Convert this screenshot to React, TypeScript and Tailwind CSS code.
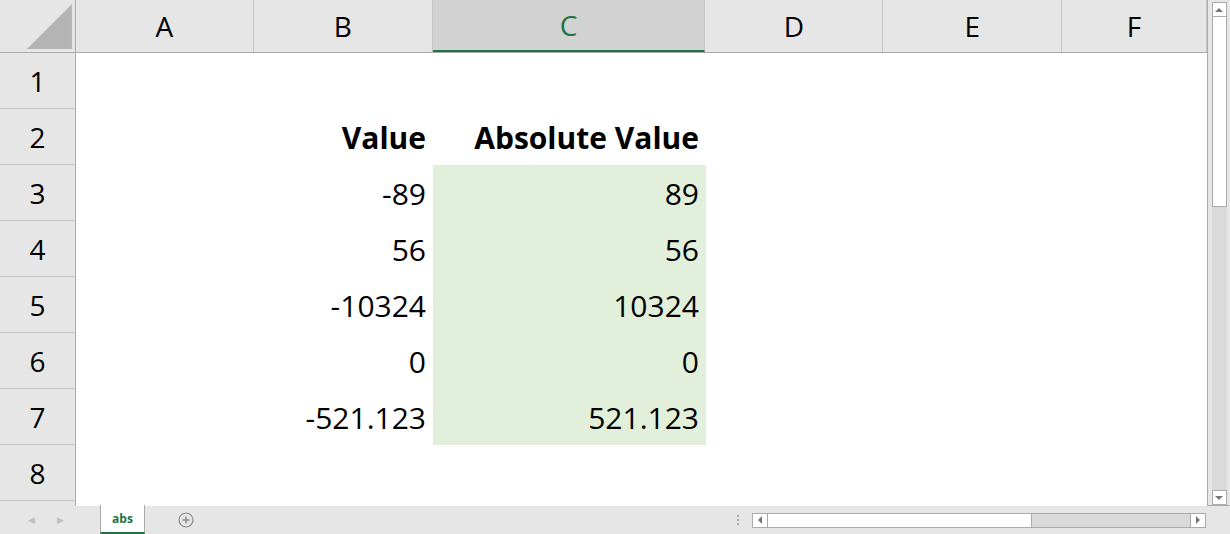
const cols = [
  { l: "A", w: 178 },
  { l: "B", w: 179 },
  { l: "C", w: 273 },
  { l: "D", w: 178 },
  { l: "E", w: 179 },
  { l: "F", w: 145 },
];
const data: Record<number, [string, string, boolean]> = {
  2: ["Value", "Absolute Value", true],
  3: ["-89", "89", false],
  4: ["56", "56", false],
  5: ["-10324", "10324", false],
  6: ["0", "0", false],
  7: ["-521.123", "521.123", false],
};

export default function App() {
  const font = { fontFamily: "'Open Sans','Noto Sans',sans-serif" };
  return (
    <div className="w-[1230px] h-[534px] bg-[#e6e6e6] flex flex-col overflow-hidden text-black" style={font}>
      <div className="flex h-[506px]">
        <div className="w-[1208px] flex flex-col border-r border-[#ababab]">
          {/* header */}
          <div className="flex h-[53px] border-b border-[#ababab]">
            <div className="w-[76px] h-[52px] border-r border-[#ababab] relative">
              <div
                className="absolute right-[3px] bottom-[3px] w-[45px] h-[45px] bg-[#b4b4b4]"
                style={{ clipPath: "polygon(100% 0,100% 100%,0 100%)" }}
              />
            </div>
            {cols.map((c) => (
              <div
                key={c.l}
                style={{ width: c.w }}
                className={`h-[52px] flex items-center justify-center text-[28px] border-r border-[#c6c6c6] ${
                  c.l === "C" ? "bg-[#d2d2d2] text-[#217346] border-b-2 border-b-[#217346]" : ""
                }`}
              >
                {c.l}
              </div>
            ))}
          </div>
          {[1, 2, 3, 4, 5, 6, 7, 8].map((r) => {
            const d = data[r];
            return (
              <div key={r} className="flex h-[56px]">
                <div className="w-[76px] border-r border-[#ababab] border-b border-b-[#c6c6c6] flex items-center justify-center text-[28px] shrink-0">
                  {r}
                </div>
                <div className="flex-1 bg-white flex">
                  <div className="w-[178px]" />
                  <div className={`w-[179px] flex items-center justify-end pr-[7px] text-[30px] ${d && d[2] ? "font-bold" : ""}`}>
                    {d ? d[0] : ""}
                  </div>
                  <div
                    className={`w-[273px] flex items-center justify-end pr-[7px] text-[30px] ${
                      d && d[2] ? "font-bold" : ""
                    } ${d && !d[2] ? "bg-[#e2efda]" : ""}`}
                  >
                    {d ? d[1] : ""}
                  </div>
                  <div className="flex-1" />
                </div>
              </div>
            );
          })}
          <div className="flex-1 flex">
            <div className="w-[76px] border-r border-[#ababab]" />
            <div className="flex-1 bg-white" />
          </div>
        </div>
        {/* vertical scrollbar */}
        <div className="flex-1 flex flex-col items-center pt-[2px] border-b border-[#ababab]">
          <div className="w-[15px] h-[15px] bg-white border border-[#ababab] flex items-center justify-center">
            <div className="w-0 h-0 border-l-[4px] border-r-[4px] border-b-[4px] border-l-transparent border-r-transparent border-b-[#777]" />
          </div>
          <div className="w-[15px] h-[190px] bg-white border-x border-b border-[#ababab]" />
          <div className="flex-1 w-[15px] bg-[#dadada]" />
          <div className="w-[15px] h-[15px] bg-white border border-[#ababab] flex items-center justify-center">
            <div className="w-0 h-0 border-l-[4px] border-r-[4px] border-t-[4px] border-l-transparent border-r-transparent border-t-[#777]" />
          </div>
        </div>
      </div>
      {/* bottom bar */}
      <div className="flex-1 flex items-stretch relative">
        <div className="w-[100px] flex items-center gap-[22px] pl-[28px] text-[#c0c0c0] text-[9px]">
          <span>◀</span>
          <span>▶</span>
        </div>
        <div className="w-[45px] bg-white border-x border-[#ababab] border-b-2 border-b-[#217346] -mt-px flex items-center justify-center text-[12px] font-bold text-[#217346]">
          abs
        </div>
        <div className="w-[82px] flex items-center justify-center">
          <svg width="16" height="16" viewBox="0 0 16 16">
            <circle cx="8" cy="8" r="7" fill="none" stroke="#8a8a8a" strokeWidth="1.2" />
            <path d="M8 4.5v7M4.5 8h7" stroke="#8a8a8a" strokeWidth="1.4" />
          </svg>
        </div>
        <div className="w-[510px]" />
        <div className="flex items-center">
          <div className="flex flex-col gap-[2px] mr-[13px]">
            <div className="w-[2px] h-[2px] bg-[#aaa]" />
            <div className="w-[2px] h-[2px] bg-[#aaa]" />
            <div className="w-[2px] h-[2px] bg-[#aaa]" />
          </div>
          <div className="flex h-[15px] w-[454px] border border-[#ababab]">
            <div className="w-[15px] bg-white border-r border-[#ababab] flex items-center justify-center">
              <div className="w-0 h-0 border-t-[4px] border-b-[4px] border-r-[4px] border-t-transparent border-b-transparent border-r-[#777]" />
            </div>
            <div className="w-[264px] bg-white border-r border-[#ababab]" />
            <div className="flex-1 bg-[#dadada]" />
            <div className="w-[15px] bg-white border-l border-[#ababab] flex items-center justify-center">
              <div className="w-0 h-0 border-t-[4px] border-b-[4px] border-l-[4px] border-t-transparent border-b-transparent border-l-[#777]" />
            </div>
          </div>
        </div>
      </div>
    </div>
  );
}
